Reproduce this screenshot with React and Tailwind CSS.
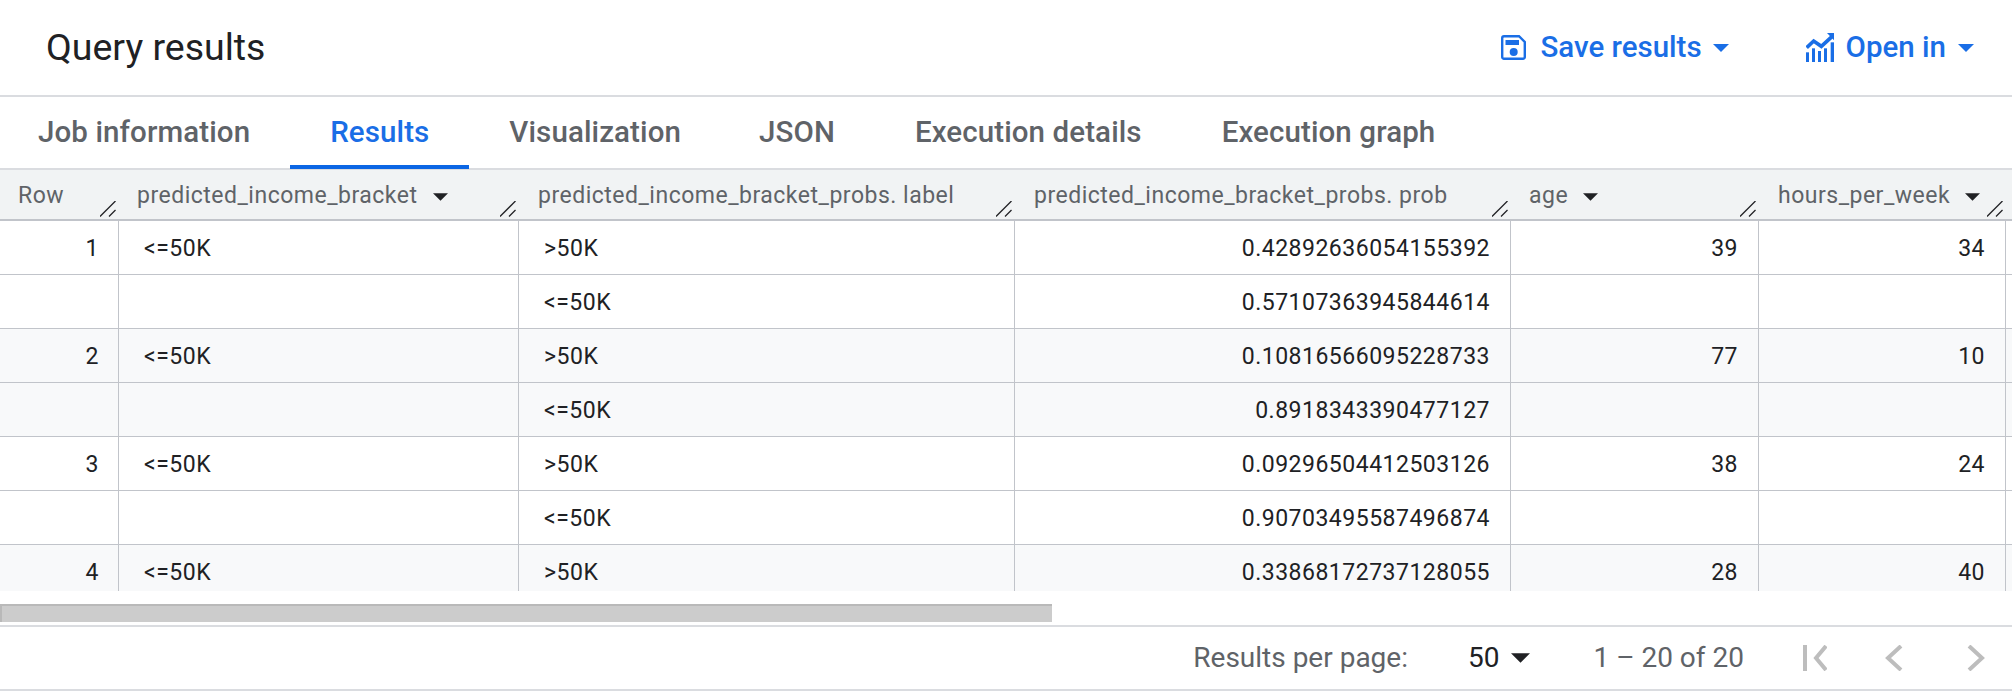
import React from 'react';

const rows = [
  { n: 1, a: ['>50K', '0.42892636054155392'], b: ['<=50K', '0.57107363945844614'], age: 39, hours: 34 },
  { n: 2, a: ['>50K', '0.10816566095228733'], b: ['<=50K', '0.8918343390477127'], age: 77, hours: 10 },
  { n: 3, a: ['>50K', '0.09296504412503126'], b: ['<=50K', '0.90703495587496874'], age: 38, hours: 24 },
  { n: 4, a: ['>50K', '0.33868172737128055'], b: null, age: 28, hours: 40 },
];

const gridCols = 'grid grid-cols-[119px_400px_496px_496px_248px_247px_1fr]';
const cell = 'h-[53px] pt-[4px] flex items-center border-r border-[#c1c4ca]';

const Caret = ({ className }) => (
  <svg viewBox="0 0 10 5" className={className} fill="currentColor">
    <path d="M0 0h10L5 5z" />
  </svg>
);

const Resizer = () => (
  <svg viewBox="0 0 16 16" className="absolute right-[3px] bottom-[2px] w-[16px] h-[16px] text-[#202124]" fill="none" stroke="currentColor" strokeWidth="1.3">
    <path d="M0 15.5 15.5 0" />
    <path d="M9 15.5 15.5 9" />
  </svg>
);

const HeaderCell = ({ label, caret, className = '' }) => (
  <div className={`relative h-[49px] pt-[4px] flex items-center ${className}`}>
    <span>{label}</span>
    {caret && <Caret className="w-[15px] h-[8px] ml-[15px] text-[#202124]" />}
    <Resizer />
  </div>
);

const Tab = ({ label, active, className = 'px-[40px]' }) => (
  <div className={`relative h-[73px] flex items-center ${className} ${active ? 'text-[#1a6ee6]' : 'text-[#5f6368]'}`}>
    {label}
    {active && <div className="absolute left-0 right-0 bottom-0 h-[4px] bg-[#0b66e4]" />}
  </div>
);

const App = () => {
  return (
    <div className="w-[2012px] h-[696px] bg-white overflow-hidden font-['Roboto',sans-serif] text-[#202124]">
      <div className="h-[97px] flex items-center justify-between border-b-2 border-[#dadce0] pl-[46px] pr-[38px]">
        <div className="text-[37.5px] text-[#202124]">Query results</div>
        <div className="flex items-center text-[29.5px] font-medium text-[#1a6ee6]">
          <svg viewBox="0 0 25 25" className="w-[25px] h-[25px] mr-[14px]">
            <path d="M3 1.2H18L23.8 7V22a1.8 1.8 0 0 1-1.8 1.8H3A1.8 1.8 0 0 1 1.2 22V3A1.8 1.8 0 0 1 3 1.2z" fill="none" stroke="currentColor" strokeWidth="2.4" />
            <rect x="4.5" y="5" width="13.5" height="5" fill="currentColor" />
            <circle cx="12.7" cy="17" r="4" fill="currentColor" />
          </svg>
          <span>Save results</span>
          <Caret className="w-[16px] h-[8px] ml-[11px]" />
          <svg viewBox="0 0 84 87" className="w-[28px] h-[29px] ml-[77px] mr-[12px]">
            <path d="M2 44 23 24 46 40 81 8" fill="none" stroke="currentColor" strokeWidth="11" />
            <path d="M63 0H84V22z" fill="currentColor" />
            <rect x="0" y="58" width="9" height="29" fill="currentColor" />
            <rect x="18" y="46" width="9" height="41" fill="currentColor" />
            <rect x="36" y="54" width="9" height="33" fill="currentColor" />
            <rect x="54" y="46" width="9" height="41" fill="currentColor" />
            <rect x="74" y="28" width="10" height="59" fill="currentColor" />
          </svg>
          <span>Open in</span>
          <Caret className="w-[16px] h-[8px] ml-[12px]" />
        </div>
      </div>

      <div className="h-[74px] flex items-stretch border-b-2 border-[#dadce0] text-[29.5px] tracking-[0.1px] font-medium -mt-[1px]">
        <Tab label="Job information" className="pl-[38px] pr-[40px]" />
        <Tab label="Results" active />
        <Tab label="Visualization" />
        <Tab label="JSON" className="pl-[38px] pr-[40px]" />
        <Tab label="Execution details" />
        <Tab label="Execution graph" />
      </div>

      <div className="h-[421px] overflow-hidden">
        <div className={`${gridCols} bg-[#f1f3f4] border-b-2 border-[#c1c4ca] text-[23px] tracking-[0.5px] text-[#5f6368]`}>
          <HeaderCell label="Row" className="pl-[18px]" />
          <HeaderCell label="predicted_income_bracket" caret className="pl-[18px]" />
          <HeaderCell label="predicted_income_bracket_probs. label" className="pl-[19px]" />
          <HeaderCell label="predicted_income_bracket_probs. prob" className="pl-[19px]" />
          <HeaderCell label="age" caret className="pl-[18px]" />
          <HeaderCell label="hours_per_week" caret className="pl-[19px]" />
          <div />
        </div>
        <div className="text-[23px] tracking-[0.5px] text-[#202124]">
          {rows.map((r) => (
            <div key={r.n} className={r.n % 2 === 0 ? 'bg-[#f8f9fa]' : 'bg-white'}>
              <div className={`${gridCols} border-b border-[#c1c4ca]`}>
                <div className={`${cell} justify-end pr-[19px]`}>{r.n}</div>
                <div className={`${cell} pl-[25px]`}>{'<=50K'}</div>
                <div className={`${cell} pl-[25px]`}>{r.a[0]}</div>
                <div className={`${cell} justify-end pr-[20px]`}>{r.a[1]}</div>
                <div className={`${cell} justify-end pr-[20px]`}>{r.age}</div>
                <div className={`${cell} justify-end pr-[20px]`}>{r.hours}</div>
                <div />
              </div>
              {r.b && (
                <div className={`${gridCols} border-b border-[#c1c4ca]`}>
                  <div className={cell} />
                  <div className={cell} />
                  <div className={`${cell} pl-[25px]`}>{r.b[0]}</div>
                  <div className={`${cell} justify-end pr-[20px]`}>{r.b[1]}</div>
                  <div className={cell} />
                  <div className={cell} />
                  <div />
                </div>
              )}
            </div>
          ))}
        </div>
      </div>

      <div className="h-[34px] pt-[13px]">
        <div className="w-[1052px] h-[18px] bg-[#cccccc] border-t-2 border-l-2 border-[#b9b9b9]" />
      </div>

      <div className="h-[66px] flex items-center justify-end border-t-2 border-b-2 border-[#dadce0] text-[28px] text-[#5f6368] pr-[26px]">
        <span>Results per page:</span>
        <span className="ml-[60px] text-[#202124]">50</span>
        <Caret className="w-[19px] h-[10px] ml-[12px] text-[#202124]" />
        <span className="ml-[63px]">1 – 20 of 20</span>
        <svg viewBox="0 0 24 26" className="w-[24px] h-[26px] ml-[59px] text-[#bdbdbd]" fill="none" stroke="currentColor" strokeWidth="4">
          <path d="M2 0v26" />
          <path d="M23 1 13 13l10 12" />
        </svg>
        <svg viewBox="0 0 19 26" className="w-[19px] h-[26px] ml-[57px] text-[#bdbdbd]" fill="none" stroke="currentColor" strokeWidth="4">
          <path d="M17 1 4 13l13 12" />
        </svg>
        <svg viewBox="0 0 19 26" className="w-[19px] h-[26px] ml-[64px] text-[#bdbdbd]" fill="none" stroke="currentColor" strokeWidth="4">
          <path d="M2 1l13 12L2 25" />
        </svg>
      </div>
    </div>
  );
};

export default App;
